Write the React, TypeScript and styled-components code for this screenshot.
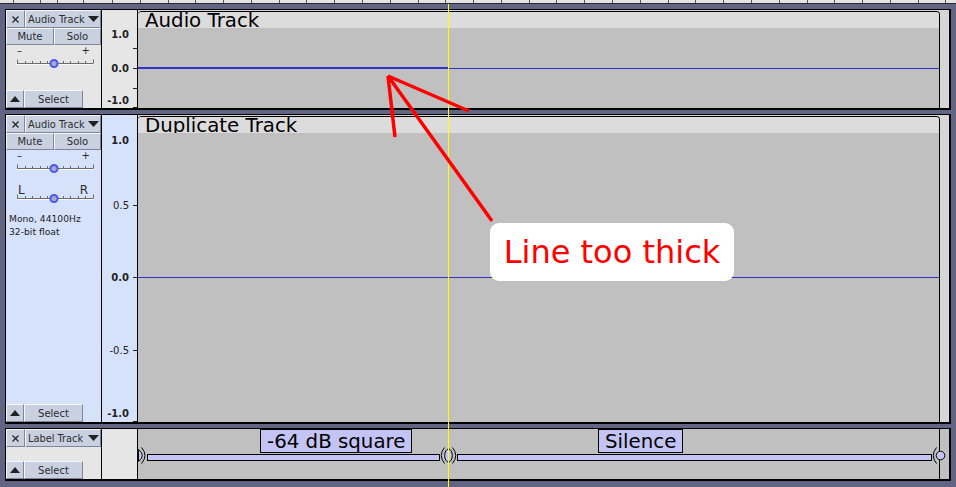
import React from "react";
import styled, { createGlobalStyle } from "styled-components";

const GlobalStyle = createGlobalStyle`
  html, body {
    margin: 0;
    padding: 0;
    background: #616583;
  }
  body {
    font-family: "DejaVu Sans", "Noto Sans", sans-serif;
  }
`;

const LAVENDER = "#c4c4f4";

type Mark = { y: number; label?: string; bold?: boolean; tick?: boolean };

const track1Marks: Mark[] = [
  { y: 24, label: "1.0", bold: true },
  { y: 38, tick: true },
  { y: 58, label: "0.0", bold: true, tick: true },
  { y: 78, tick: true },
  { y: 90, label: "-1.0", bold: true },
  { y: 97, tick: true },
];

const track2Marks: Mark[] = [
  { y: 25, label: "1.0", bold: true },
  { y: 90, label: "0.5", tick: true },
  { y: 162, label: "0.0", bold: true, tick: true },
  { y: 235, label: "-0.5", tick: true },
  { y: 298, label: "-1.0", bold: true },
  { y: 306, tick: true },
];

const rulerTicks = [13, 40, 57, 83, ...Array.from({ length: 31 }, (_, i) => Math.round(112 + i * 27.78))];

const Page = styled.div`
  position: relative;
  width: 956px;
  height: 487px;
  overflow: hidden;
  background: #616583;
  display: flex;
  flex-direction: column;
`;

const TimeRuler = styled.div`
  position: relative;
  flex: none;
  height: 3px;
  background: #e4e4e4;
  border-bottom: 1px solid #2a2a2a;
`;

const RulerTick = styled.div`
  position: absolute;
  top: 0;
  width: 1px;
  height: 3px;
  background: #5a5a5a;
`;

const Tracks = styled.div`
  display: flex;
  flex-direction: column;
  gap: 4px;
  padding: 5px 0 0 5px;
`;

const Track = styled.div<{ $height: number }>`
  flex: none;
  display: flex;
  width: 943px;
  height: ${(p) => p.$height}px;
  border: 1px solid #000;
  border-right-width: 2px;
  border-bottom-width: 2px;
`;

const Panel = styled.div<{ $selected?: boolean }>`
  flex: none;
  width: 95px;
  display: flex;
  flex-direction: column;
  background: ${(p) => (p.$selected ? "#d6e2fa" : "#e6e6e6")};
  border-right: 1px solid #000;
  color: #2c2c2c;
`;

const Row = styled.div<{ $height: number }>`
  flex: none;
  display: flex;
  height: ${(p) => p.$height}px;
`;

const Button = styled.div<{ $width?: number }>`
  box-sizing: border-box;
  flex: ${(p) => (p.$width ? "none" : "1")};
  width: ${(p) => (p.$width ? `${p.$width}px` : "auto")};
  height: 100%;
  display: flex;
  align-items: center;
  justify-content: center;
  background: #c9d1e1;
  border: 1px solid;
  border-color: #f5f7fb #80859a #80859a #f5f7fb;
  font-size: 10px;
  white-space: nowrap;
`;

const TitleButton = styled(Button)`
  justify-content: space-between;
  padding: 0 1px 0 2px;
  font-size: 9.8px;
`;

const Spacer = styled.div`
  flex: 1;
`;

const SliderLabels = styled.div<{ $size: number; $left: number; $right: number; $top?: number }>`
  flex: none;
  display: flex;
  justify-content: space-between;
  height: 12px;
  margin-top: ${(p) => p.$top ?? 0}px;
  padding: 0 ${(p) => p.$right}px 0 ${(p) => p.$left}px;
  font-size: ${(p) => p.$size}px;
  line-height: 12px;
`;

const SliderGraphic = styled.svg`
  display: block;
  flex: none;
  overflow: visible;
`;

const Info = styled.div`
  flex: none;
  margin-top: 8px;
  padding-left: 3px;
  font-size: 9.2px;
  line-height: 13px;
  color: #222;
`;

const VRuler = styled.div<{ $selected?: boolean }>`
  position: relative;
  flex: none;
  width: 35px;
  background: ${(p) => (p.$selected ? "#d6e2fa" : "#e6e6e6")};
  border-right: 1px solid #000;
`;

const RulerLabel = styled.div<{ $bold?: boolean }>`
  position: absolute;
  right: 8px;
  height: 12px;
  line-height: 13px;
  font-size: 10px;
  font-weight: ${(p) => (p.$bold ? 700 : 400)};
  color: #222;
  white-space: nowrap;
`;

const RulerMark = styled.div`
  position: absolute;
  right: 0;
  width: 4px;
  height: 1px;
  background: #222;
`;

const ClipArea = styled.div`
  flex: 1;
  display: flex;
  padding-top: 1px;
  background: #d6d6d6;
`;

const Clip = styled.div`
  flex: none;
  width: 801px;
  display: flex;
  flex-direction: column;
  background: #c0c0c0;
  border-top: 1px solid #000;
  border-right: 1px solid #000;
  border-radius: 4px 4px 0 0;
  overflow: hidden;
`;

const ClipHeader = styled.div`
  flex: none;
  height: 16px;
  padding-left: 7px;
  background: #dcdcdc;
  font-size: 19.8px;
  line-height: 18px;
  color: #000;
  white-space: nowrap;
  overflow: hidden;
`;

const ClipBody = styled.div`
  flex: 1;
`;

const LabelArea = styled.div`
  flex: 1;
  display: flex;
  background: #c0c0c0;
`;

const LabelLane = styled.div`
  position: relative;
  flex: none;
  width: 801px;
  border-right: 1px solid #000;
`;

const LabelBox = styled.div`
  position: absolute;
  top: 0;
  box-sizing: border-box;
  height: 24px;
  padding: 0 6px;
  border: 1px solid #000;
  background: ${LAVENDER};
  font-size: 19.8px;
  line-height: 23px;
  color: #000;
  white-space: nowrap;
`;

const LabelBar = styled.div`
  position: absolute;
  top: 25px;
  box-sizing: border-box;
  height: 7px;
  border: 1px solid #000;
  background: ${LAVENDER};
`;

const Handle = styled.svg`
  position: absolute;
  top: 18px;
  overflow: visible;
`;

const Cursor = styled.div`
  position: absolute;
  left: 448px;
  top: 4px;
  bottom: 0;
  width: 1px;
  background: #ffff00;
`;

const Overlay = styled.svg`
  position: absolute;
  left: 0;
  top: 0;
  pointer-events: none;
`;

const Note = styled.div`
  position: absolute;
  left: 490px;
  top: 223px;
  width: 244px;
  height: 58px;
  border-radius: 9px;
  background: #fff;
  color: #ff0000;
  font-size: 32px;
  line-height: 58px;
  text-align: center;
  white-space: nowrap;
`;

const CloseIcon = () => (
  <svg width="7" height="7" viewBox="0 0 7 7">
    <path d="M0.5 0.5 L6.5 6.5 M6.5 0.5 L0.5 6.5" stroke="#222" strokeWidth="1.2" />
  </svg>
);

const DownIcon = () => (
  <svg width="11" height="6" viewBox="0 0 11 6">
    <path d="M0 0 H11 L5.5 6 Z" fill="#222" />
  </svg>
);

const UpIcon = () => (
  <svg width="10" height="6" viewBox="0 0 10 6">
    <path d="M0 6 H10 L5 0 Z" fill="#222" />
  </svg>
);

const Slider = ({ height, lineY }: { height: number; lineY: number }) => {
  const ticks = Array.from({ length: 11 }, (_, i) => Math.round(11 + i * 7.6) + 0.5);
  return (
    <SliderGraphic width="95" height={height}>
      <line x1="11" y1={lineY} x2="87" y2={lineY} stroke="#6c6c6c" />
      <line x1="11" y1={lineY + 1} x2="87" y2={lineY + 1} stroke="#fafafa" />
      {ticks.map((x, i) => (
        <line
          key={i}
          x1={x}
          x2={x}
          y1={i === 0 || i === 10 ? lineY - 4 : lineY - 2.5}
          y2={lineY}
          stroke="#6c6c6c"
        />
      ))}
      <circle cx="48" cy={lineY} r="3.6" fill="#a6a8c4" stroke="#4b58ee" strokeWidth="2" />
    </SliderGraphic>
  );
};

const TitleRow = ({ name }: { name: string }) => (
  <Row $height={18}>
    <Button $width={19}>
      <CloseIcon />
    </Button>
    <TitleButton>
      <span>{name}</span>
      <DownIcon />
    </TitleButton>
  </Row>
);

const BottomRow = () => (
  <Row $height={18}>
    <Button $width={18}>
      <UpIcon />
    </Button>
    <Button $width={59}>Select</Button>
    <Spacer />
  </Row>
);

const AmpRuler = ({ marks, selected }: { marks: Mark[]; selected?: boolean }) => (
  <VRuler $selected={selected}>
    {marks.map((m, i) => (
      <React.Fragment key={i}>
        {m.label && (
          <RulerLabel $bold={m.bold} style={{ top: m.y - 6 }}>
            {m.label}
          </RulerLabel>
        )}
        {m.tick && <RulerMark style={{ top: m.y }} />}
      </React.Fragment>
    ))}
  </VRuler>
);

const App = () => (
  <Page>
    <GlobalStyle />
    <TimeRuler>
      {rulerTicks.map((x) => (
        <RulerTick key={x} style={{ left: x }} />
      ))}
    </TimeRuler>

    <Tracks>
      <Track $height={98}>
        <Panel>
          <TitleRow name="Audio Track" />
          <Row $height={17}>
            <Button $width={48}>Mute</Button>
            <Button>Solo</Button>
          </Row>
          <SliderLabels $size={10} $left={11} $right={11}>
            <span>–</span>
            <span>+</span>
          </SliderLabels>
          <Slider height={12} lineY={6.5} />
          <Spacer />
          <BottomRow />
        </Panel>
        <AmpRuler marks={track1Marks} />
        <ClipArea>
          <Clip>
            <ClipHeader>Audio Track</ClipHeader>
            <ClipBody>
              <svg width="801" height="80" style={{ display: "block" }}>
                <rect x="0" y="39" width="310" height="2" fill="#3232c8" />
                <rect x="310" y="40" width="491" height="1" fill="#3232c8" />
              </svg>
            </ClipBody>
          </Clip>
        </ClipArea>
      </Track>

      <Track $height={307}>
        <Panel $selected>
          <TitleRow name="Audio Track" />
          <Row $height={17}>
            <Button $width={48}>Mute</Button>
            <Button>Solo</Button>
          </Row>
          <SliderLabels $size={10} $left={11} $right={11}>
            <span>–</span>
            <span>+</span>
          </SliderLabels>
          <Slider height={12} lineY={6.5} />
          <SliderLabels $size={12} $left={12} $right={13} $top={10}>
            <span>L</span>
            <span>R</span>
          </SliderLabels>
          <Slider height={8} lineY={2.5} />
          <Info>
            Mono, 44100Hz
            <br />
            32-bit float
          </Info>
          <Spacer />
          <BottomRow />
        </Panel>
        <AmpRuler marks={track2Marks} selected />
        <ClipArea>
          <Clip>
            <ClipHeader>Duplicate Track</ClipHeader>
            <ClipBody>
              <svg width="801" height="289" style={{ display: "block" }}>
                <rect x="0" y="144" width="801" height="1" fill="#3232c8" />
              </svg>
            </ClipBody>
          </Clip>
        </ClipArea>
      </Track>

      <Track $height={50}>
        <Panel>
          <TitleRow name="Label Track" />
          <Spacer />
          <BottomRow />
        </Panel>
        <VRuler />
        <LabelArea>
          <LabelLane>
            <LabelBox style={{ left: 122 }}>-64 dB square</LabelBox>
            <LabelBox style={{ left: 460 }}>Silence</LabelBox>
            <LabelBar style={{ left: 9, width: 293 }} />
            <LabelBar style={{ left: 319, width: 475 }} />
            <Handle width="10" height="17" style={{ left: 0 }}>
              <path d="M0.5 2.5 Q8 8.5 0.5 14.5 Z" fill={LAVENDER} stroke="#000" />
              <path d="M3.5 0.5 Q10.5 8.5 3.5 16.5" fill="none" stroke="#000" />
            </Handle>
            <Handle width="17" height="17" style={{ left: 302 }}>
              <path d="M4.5 0.5 Q-2 8.5 4.5 16.5" fill="none" stroke="#000" />
              <ellipse cx="8.5" cy="8.5" rx="3.8" ry="6.5" fill={LAVENDER} stroke="#000" />
              <path d="M12.5 0.5 Q19 8.5 12.5 16.5" fill="none" stroke="#000" />
            </Handle>
            <Handle width="14" height="17" style={{ left: 794 }}>
              <path d="M4.5 0.5 Q-2 8.5 4.5 16.5" fill="none" stroke="#000" />
              <circle cx="8.5" cy="8.5" r="4.3" fill={LAVENDER} stroke="#000" />
            </Handle>
          </LabelLane>
        </LabelArea>
      </Track>
    </Tracks>

    <Cursor />

    <Overlay width="956" height="487">
      <g stroke="#ff0000" strokeWidth="3.5" fill="none">
        <line x1="388" y1="76" x2="395" y2="137" />
        <line x1="388" y1="76" x2="469" y2="111" />
        <line x1="388" y1="76" x2="492" y2="221" />
      </g>
    </Overlay>
    <Note>Line too thick</Note>
  </Page>
);

export default App;
